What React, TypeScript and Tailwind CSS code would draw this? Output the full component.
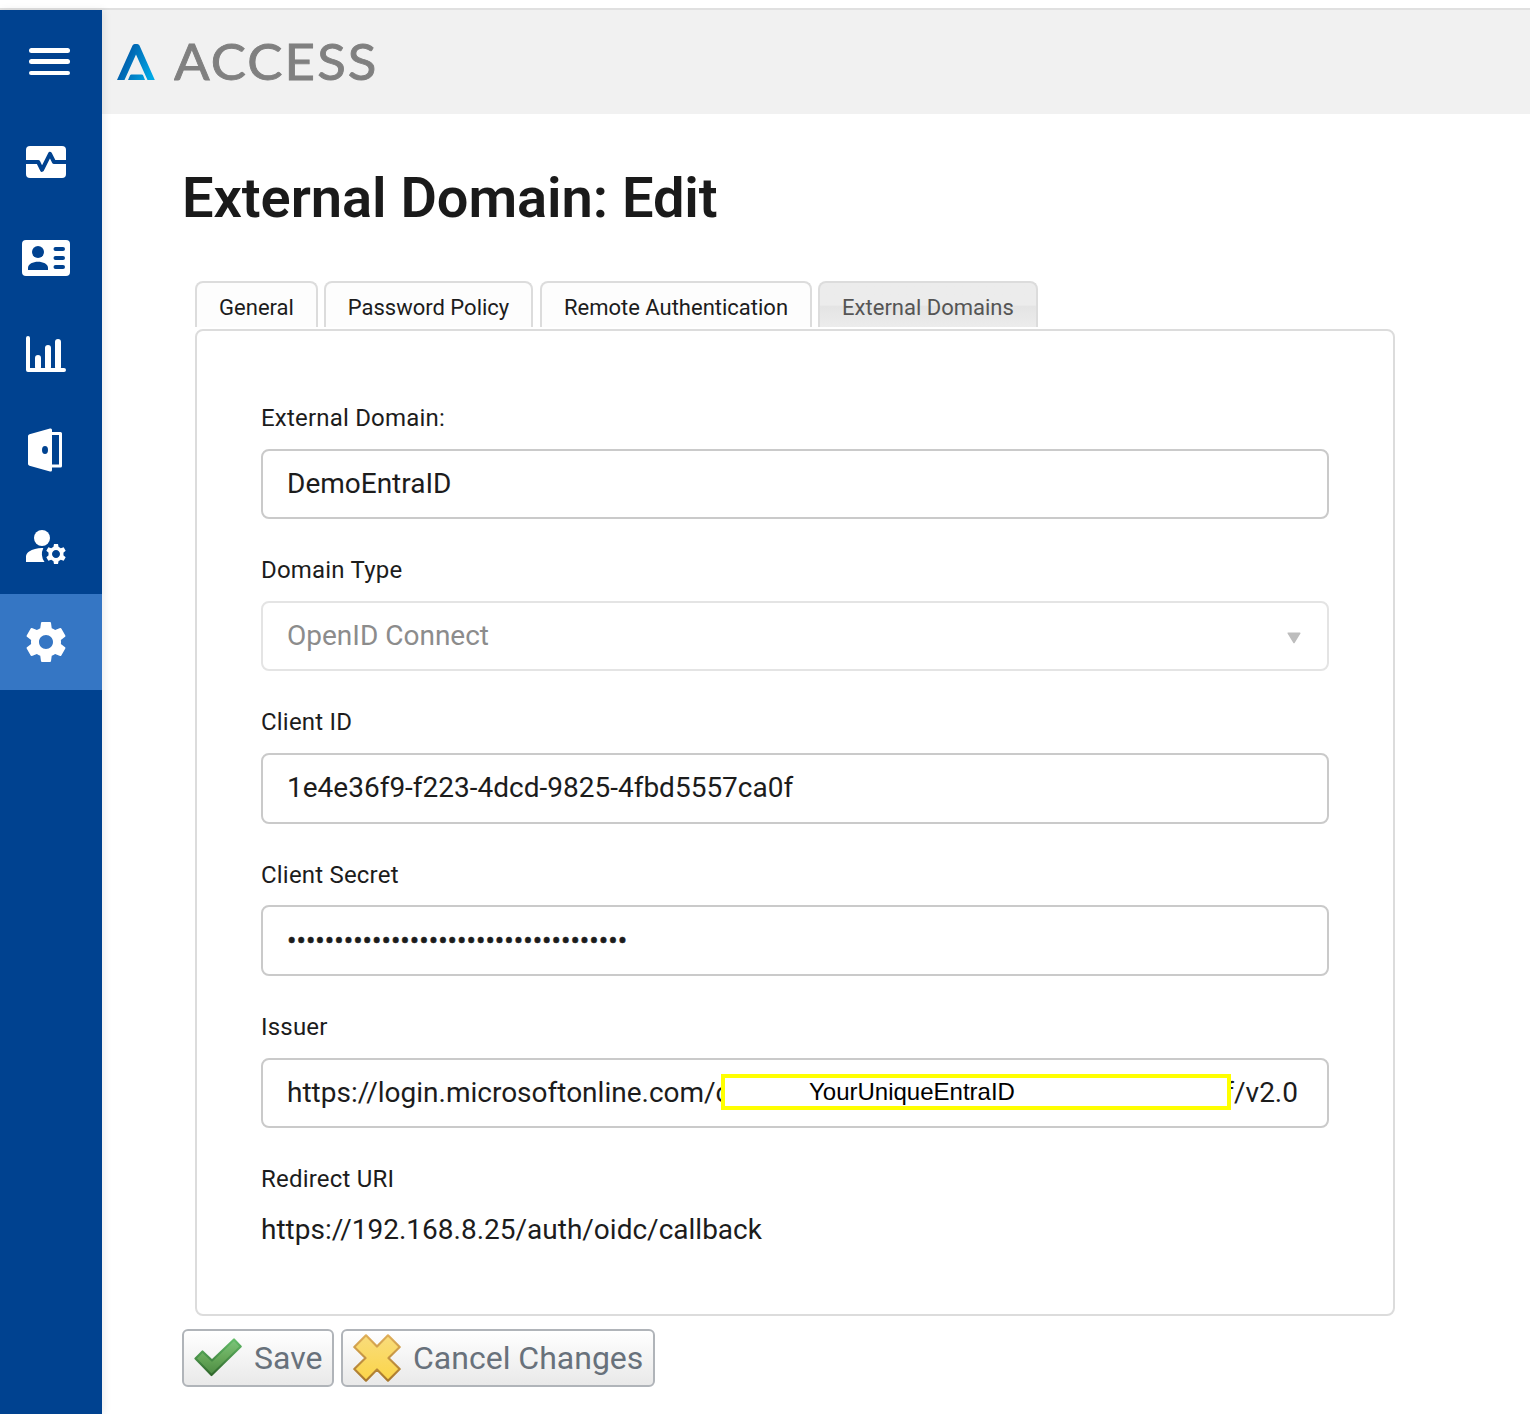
import React, { useState } from "react";
import { MdManageAccounts } from "react-icons/md";

const MonitorIcon = () => (
    <svg width="48" height="48" viewBox="0 0 48 48">
        <rect x="4" y="8" width="40" height="32" rx="4" fill="#fff" />
        <path d="M4 24h12.2l3.8 7.8 8-16 4 8.2h12" fill="none" stroke="#004290" strokeWidth="4" strokeLinejoin="round" />
    </svg>
);

const IdCardIcon = () => (
    <svg width="48" height="48" viewBox="0 0 48 48">
        <rect x="0" y="6" width="48" height="36" rx="4" fill="#fff" />
        <circle cx="16" cy="18" r="6" fill="#004290" />
        <path d="M6 36v-2c0-4 5-6.200 10-6.200s10 2.200 10 6.200v2z" fill="#004290" />
        <path d="M33.500 15h7.500M33.500 24h7.500M33.500 33h7.500" stroke="#004290" strokeWidth="4" strokeLinecap="round" />
    </svg>
);

const ChartIcon = () => (
    <svg width="48" height="48" viewBox="0 0 48 48" fill="none" stroke="#fff" strokeLinecap="round">
        <path d="M6 8v32h36" strokeWidth="4" strokeLinejoin="round" />
        <path d="M16 28v9M26 18v19M36 12v25" strokeWidth="6" />
    </svg>
);

const DoorIcon = () => (
    <svg width="48" height="48" viewBox="0 0 48 48">
        <path d="M29 7.500h9.500V40H29" fill="none" stroke="#fff" strokeWidth="3" strokeLinejoin="round" />
        <path d="M7.500 8.300 28 2.600q2-.6 2 1.400v40q0 2-2 1.400L7.500 39.700Q6 39.200 6 38V10q0-1.300 1.500-1.700z" fill="#fff" />
        <ellipse cx="23" cy="24" rx="3" ry="4" fill="#004290" />
    </svg>
);

const GearIcon = () => (
    <svg width="48" height="48" viewBox="0 0 24 24" fill="#fff">
        <path d="M19.43 12.98c.04-.32.07-.64.07-.98s-.03-.66-.07-.98l2.11-1.65c.19-.15.24-.42.12-.64l-2-3.46c-.12-.22-.39-.3-.61-.22l-2.49 1c-.52-.4-1.08-.73-1.69-.98l-.38-2.65C14.46 2.18 14.25 2 14 2h-4c-.25 0-.46.18-.49.42l-.38 2.65c-.61.25-1.17.59-1.69.98l-2.49-1c-.23-.09-.49 0-.61.22l-2 3.46c-.13.22-.07.49.12.64l2.11 1.65c-.04.32-.07.65-.07.98s.03.66.07.98l-2.11 1.65c-.19.15-.24.42-.12.64l2 3.46c.12.22.39.3.61.22l2.49-1c.52.4 1.08.73 1.69.98l.38 2.65c.03.24.24.42.49.42h4c.25 0 .46-.18.49-.42l.38-2.65c.61-.25 1.17-.59 1.69-.98l2.49 1c.23.09.49 0 .61-.22l2-3.46c.12-.22.07-.49-.12-.64l-2.11-1.65zM12 15.5c-1.93 0-3.5-1.57-3.5-3.5s1.57-3.5 3.5-3.5 3.5 1.57 3.5 3.5-1.57 3.5-3.5 3.5z" />
    </svg>
);

const LogoMark = () => (
    <svg width="38" height="36" viewBox="0 0 38 36">
        <defs>
            <linearGradient id="logo" x1="0" y1="0.300" x2="1" y2="0.700">
                <stop offset="0.100" stopColor="#0054a4" />
                <stop offset="1" stopColor="#00a9e6" />
            </linearGradient>
        </defs>
        <path
            d="M15.500 1.500Q16.200 0 17.700 0h2.600q1.500 0 2.200 1.500L37.800 36h-7.300L19 10.500 7.500 36H0zM14.400 30.500h10.200q1.200 0 1.600 1l1.800 4.500H11l2-4.500q.4-1 1.400-1z"
            fill="url(#logo)"
        />
    </svg>
);

const CheckIcon = () => (
    <svg width="48" height="40" viewBox="0 0 48 40">
        <defs>
            <linearGradient id="check" x1="0" y1="0" x2="0" y2="1">
                <stop offset="0" stopColor="#7cc47b" />
                <stop offset="0.500" stopColor="#67a95a" />
                <stop offset="1" stopColor="#4c8a42" />
            </linearGradient>
            <linearGradient id="checkEdge" x1="0" y1="0" x2="0" y2="1">
                <stop offset="0" stopColor="#63bd68" />
                <stop offset="1" stopColor="#2f662b" />
            </linearGradient>
        </defs>
        <path d="M1.500 20.500 8.500 13.500 18 22.500 40 1.500 46.700 8.500 17.500 37z" fill="url(#check)" stroke="url(#checkEdge)" strokeWidth="2.200" strokeLinejoin="round" />
    </svg>
);

const CrossIcon = () => (
    <svg width="48" height="48" viewBox="0 0 48 48">
        <defs>
            <linearGradient id="cross" x1="0" y1="0" x2="0" y2="1">
                <stop offset="0" stopColor="#f9dc7c" />
                <stop offset="1" stopColor="#fbd548" />
            </linearGradient>
            <linearGradient id="crossEdge" x1="0" y1="0" x2="0" y2="1">
                <stop offset="0" stopColor="#dfae58" />
                <stop offset="1" stopColor="#a8782c" />
            </linearGradient>
        </defs>
        <path
            d="M13 1.300 24 12.500 35 1.300 46.700 13 35.500 24 46.700 35 35 46.700 24 35.500 13 46.700 1.300 35 12.500 24 1.300 13z"
            fill="url(#cross)"
            stroke="url(#crossEdge)"
            strokeWidth="2.200"
            strokeLinejoin="round"
        />
    </svg>
);

const navItems = [
    { id: "monitor", icon: <MonitorIcon /> },
    { id: "identity", icon: <IdCardIcon /> },
    { id: "reports", icon: <ChartIcon /> },
    { id: "doors", icon: <DoorIcon /> },
    { id: "users", icon: <MdManageAccounts size={48} /> },
    { id: "settings", icon: <GearIcon /> },
];

const tabs = [
    { label: "General", width: "w-[123px] mr-[6px]" },
    { label: "Password Policy", width: "w-[209px] mr-[7px]" },
    { label: "Remote Authentication", width: "w-[272px] mr-[6px]" },
    { label: "External Domains", width: "w-[220px]" },
];

function Field({ label, disabled, children }: { label: string; disabled?: boolean; children: React.ReactNode }) {
    return (
        <div className="mb-[35.08px]">
            <div className="h-8 mb-[14.75px] text-[24px] leading-8 tracking-[0.2px] text-[#1c1c1c]">{label}</div>
            <div
                className={`relative h-[70.4px] flex items-center border-2 rounded-lg bg-white px-[24px] text-[28px] whitespace-nowrap
                ${disabled ? "border-[#e4e4e4] text-[#8c8c8c]" : "border-[#cacaca] text-[#1c1c1c]"}`}
            >
                {children}
            </div>
        </div>
    );
}

export default function App() {
    const [activeNav, setActiveNav] = useState("settings");
    const [activeTab, setActiveTab] = useState("External Domains");

    return (
        <div className="w-[1530px] h-[1414px] overflow-hidden bg-white pt-2 font-[Roboto,sans-serif]">
            <div className="h-full flex border-t-2 border-[#e0e0e0]">

                {/* Sidebar */}
                <aside className="relative z-10 w-[102px] shrink-0 bg-[#004290] text-white shadow-[2px_0_8px_rgba(0,0,0,0.080)]">
                    <button type="button" className="h-[104px] w-full flex flex-col items-start gap-[6.500px] pt-[38px] pl-[29px]">
                        <span className="w-[41px] h-[4.800px] rounded-full bg-white" />
                        <span className="w-[41px] h-[4.800px] rounded-full bg-white" />
                        <span className="w-[41px] h-[4.800px] rounded-full bg-white" />
                    </button>
                    {navItems.map((item) => (
                        <button
                            key={item.id}
                            type="button"
                            onClick={() => setActiveNav(item.id)}
                            className={`h-24 w-full flex items-center pl-[22px] ${activeNav === item.id ? "bg-[#3576c4]" : ""}`}
                        >
                            {item.icon}
                        </button>
                    ))}
                </aside>

                <div className="flex-1">
                    {/* Header */}
                    <header className="h-[104px] bg-[#f1f1f1] flex items-center pl-[15px]">
                        <LogoMark />
                        <svg width="210" height="60" viewBox="0 0 210 60" className="ml-[19px] font-[Lato,sans-serif] text-[50px]">
                            <text x="0" y="47.500" textLength="204.500" lengthAdjust="spacingAndGlyphs" letterSpacing="2" fill="#808080" stroke="#808080" strokeWidth="0.900">
                                ACCESS
                            </text>
                        </svg>
                    </header>

                    <main className="pl-[80px]">
                        <h1 className="pt-[49px] h-[167px] text-[56px] leading-[70px] font-semibold tracking-[-0.05px] text-[#1a1a1a]">External Domain: Edit</h1>

                        {/* Tabs */}
                        <div className="flex ml-[13px] mb-[2px]">
                            {tabs.map((tab) => (
                                <button
                                    key={tab.label}
                                    type="button"
                                    onClick={() => setActiveTab(tab.label)}
                                    className={`h-[46px] pt-[4px] border-2 border-b-0 border-[#dcdcdc] rounded-t-lg text-[22px] whitespace-nowrap ${tab.width}
                                    ${activeTab === tab.label
                                            ? "bg-linear-to-b from-[#ececec] from-50% via-[#e4e4e4] via-53% to-[#ececec] text-[#555]"
                                            : "bg-[#fdfdfd] text-[#1c1c1c]"
                                        }`}
                                >
                                    {tab.label}
                                </button>
                            ))}
                        </div>

                        {/* Form panel */}
                        <section className="ml-[13px] w-[1200px] h-[987px] border-2 border-[#dcdcdc] rounded-lg pt-[71px] px-[64px]">
                            <Field label="External Domain:">DemoEntraID</Field>
                            <Field label="Domain Type" disabled>
                                <span className="flex-1">OpenID Connect</span>
                                <svg width="14" height="12" viewBox="0 0 14 12" className="mr-[2px] mt-[3px]">
                                    <path d="M1.200 1.200h11.600L7 10.500z" fill="#bdbdbd" stroke="#bdbdbd" strokeWidth="1.500" strokeLinejoin="round" />
                                </svg>
                            </Field>
                            <Field label="Client ID">1e4e36f9-f223-4dcd-9825-4fbd5557ca0f</Field>
                            <Field label="Client Secret">
                                <span className="[-webkit-text-stroke:0.5px_#1c1c1c]">{"•".repeat(36)}</span>
                            </Field>
                            <Field label="Issuer">
                                <span>https://login.microsoftonline.com/c</span>
                                <span className="ml-auto mr-[5px]">f/v2.0</span>
                                <span className="absolute left-[458px] top-[14px] w-[510px] h-[36px] border-[4px] border-[#ffff00] bg-white pl-[84px] font-['Liberation_Sans',sans-serif] text-[24px] leading-[27px] text-black">
                                    YourUniqueEntraID
                                </span>
                            </Field>
                            <div className="text-[24px] leading-8 tracking-[0.2px] text-[#1c1c1c]">Redirect URI</div>
                            <div className="mt-[15px] text-[28px] leading-10 text-[#1c1c1c]">https://192.168.8.25/auth/oidc/callback</div>
                        </section>

                        {/* Actions */}
                        <div className="flex gap-[7px] mt-[13px] text-[32px] text-[#68717b]">
                            <button type="button" className="w-[152px] h-[58px] flex items-center gap-[12px] pl-[10px] border-2 border-[#b0b4b9] rounded-md bg-linear-to-b from-white to-[#e9e9e9]">
                                <CheckIcon />
                                Save
                            </button>
                            <button type="button" className="w-[314px] h-[58px] flex items-center gap-[12px] pl-[10px] border-2 border-[#b0b4b9] rounded-md bg-linear-to-b from-white to-[#e9e9e9] whitespace-nowrap">
                                <CrossIcon />
                                Cancel Changes
                            </button>
                        </div>
                    </main>
                </div>
            </div>
        </div>
    );
}
